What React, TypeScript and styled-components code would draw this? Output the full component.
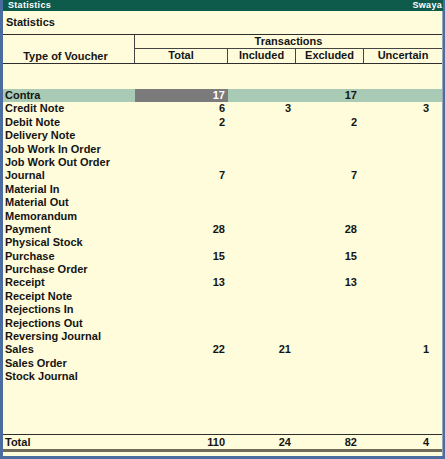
import React from "react";
import styled, { createGlobalStyle } from "styled-components";

const GlobalStyle = createGlobalStyle`
  html, body { margin: 0; padding: 0; background: #4a6c9e; }
  body { font-family: "Liberation Sans", Arial, sans-serif; }
`;

const COLS = "132px 93px 68px 68px 1fr";

const Frame = styled.div`
  width: 445px;
  height: 459px;
  box-sizing: border-box;
  padding: 0 2px 3px 3px;
  background: #4a6c9e;
  display: flex;
  flex-direction: column;
`;

const TitleBar = styled.div`
  height: 11px;
  flex: none;
  background: #0e5a4b;
  color: #ffffff;
  font-size: 9px;
  font-weight: bold;
  line-height: 11px;
  display: flex;
  justify-content: space-between;
  padding: 0 1px 0 5px;
  letter-spacing: 0.3px;
  overflow: hidden;
  white-space: nowrap;
`;

const Panel = styled.div`
  flex: 1;
  background: #fffcdc;
  display: flex;
  flex-direction: column;
  border-right: 1px solid #9aa9b8;
  color: #141414;
  font-weight: bold;
  font-size: 11px;
`;

const Heading = styled.div`
  height: 24px;
  flex: none;
  box-sizing: border-box;
  border-bottom: 1px solid #2e2e2e;
  font-size: 11px;
  line-height: 22px;
  padding-left: 3px;
`;

const HeaderGrid = styled.div`
  display: grid;
  grid-template-columns: ${COLS};
  grid-template-rows: 14px 14px;
  flex: none;
  border-bottom: 1px solid #2e2e2e;
`;

const VoucherHead = styled.div`
  grid-row: 1 / span 2;
  border-right: 1px solid #444;
  display: flex;
  align-items: flex-end;
  justify-content: center;
  line-height: 14px;
  padding-right: 6px;
`;

const GroupHead = styled.div`
  grid-column: 2 / span 4;
  text-align: center;
  border-bottom: 1px solid #444;
  line-height: 13px;
`;

const ColHead = styled.div<{ $last?: boolean }>`
  text-align: center;
  line-height: 13px;
  border-right: ${(p) => (p.$last ? "none" : "1px solid #444")};
`;

const Gap = styled.div`
  height: 25px;
  flex: none;
`;

const Row = styled.div<{ $active?: boolean }>`
  display: grid;
  grid-template-columns: ${COLS};
  height: 13.4px;
  line-height: 13.4px;
  background: ${(p) => (p.$active ? "#a9cbb5" : "transparent")};
  white-space: nowrap;
`;

const Name = styled.div`
  padding-left: 2px;
`;

const PAD = [3, 5, 7, 13];

const Num = styled.div<{ $col: number; $focus?: boolean }>`
  text-align: right;
  padding-right: ${(p) => PAD[p.$col]}px;
  background: ${(p) => (p.$focus ? "#7b7b7b" : "transparent")};
  color: ${(p) => (p.$focus ? "#ffffff" : "inherit")};
`;

const Filler = styled.div`
  flex: 1;
`;

const TotalRow = styled.div`
  display: grid;
  grid-template-columns: ${COLS};
  height: 14px;
  line-height: 14px;
  flex: none;
  border-top: 1px solid #2e2e2e;
  border-bottom: 3px solid #6e6b5a;
`;

const Tail = styled.div`
  height: 4px;
  flex: none;
`;

type Entry = [string, string, string, string, string];

const rows: Entry[] = [
  ["Contra", "17", "", "17", ""],
  ["Credit Note", "6", "3", "", "3"],
  ["Debit Note", "2", "", "2", ""],
  ["Delivery Note", "", "", "", ""],
  ["Job Work In Order", "", "", "", ""],
  ["Job Work Out Order", "", "", "", ""],
  ["Journal", "7", "", "7", ""],
  ["Material In", "", "", "", ""],
  ["Material Out", "", "", "", ""],
  ["Memorandum", "", "", "", ""],
  ["Payment", "28", "", "28", ""],
  ["Physical Stock", "", "", "", ""],
  ["Purchase", "15", "", "15", ""],
  ["Purchase Order", "", "", "", ""],
  ["Receipt", "13", "", "13", ""],
  ["Receipt Note", "", "", "", ""],
  ["Rejections In", "", "", "", ""],
  ["Rejections Out", "", "", "", ""],
  ["Reversing Journal", "", "", "", ""],
  ["Sales", "22", "21", "", "1"],
  ["Sales Order", "", "", "", ""],
  ["Stock Journal", "", "", "", ""],
];

export default function App() {
  return (
    <>
      <GlobalStyle />
      <Frame>
        <TitleBar>
          <span>Statistics</span>
          <span>Swaya</span>
        </TitleBar>
        <Panel>
          <Heading>Statistics</Heading>
          <HeaderGrid>
            <VoucherHead>Type of Voucher</VoucherHead>
            <GroupHead>Transactions</GroupHead>
            <ColHead>Total</ColHead>
            <ColHead>Included</ColHead>
            <ColHead>Excluded</ColHead>
            <ColHead $last>Uncertain</ColHead>
          </HeaderGrid>
          <Gap />
          {rows.map((r, i) => (
            <Row key={r[0]} $active={i === 0}>
              <Name>{r[0]}</Name>
              {r.slice(1).map((v, c) => (
                <Num key={c} $col={c} $focus={i === 0 && c === 0}>
                  {v}
                </Num>
              ))}
            </Row>
          ))}
          <Filler />
          <TotalRow>
            <Name>Total</Name>
            <Num $col={0}>110</Num>
            <Num $col={1}>24</Num>
            <Num $col={2}>82</Num>
            <Num $col={3}>4</Num>
          </TotalRow>
          <Tail />
        </Panel>
      </Frame>
    </>
  );
}
